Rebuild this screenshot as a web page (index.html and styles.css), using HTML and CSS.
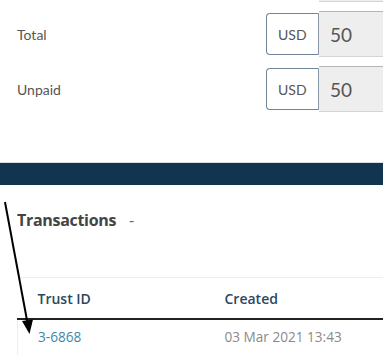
FILE: index.html
```html
<!DOCTYPE html>
<html>
<head>
    <title>Invoice</title>
    <link rel="stylesheet" href="styles.css">
</head>
<body>
    <div class="panel">
        <div class="form">
            <!-- previous field, scrolled mostly out of view -->
            <div class="row">
                <span></span>
                <div class="input-group">
                    <span class="addon"></span>
                    <span class="amount"></span>
                </div>
            </div>
            <div class="row">
                <label>Total</label>
                <div class="input-group">
                    <span class="addon">USD</span>
                    <input class="amount" value="50" readonly>
                </div>
            </div>
            <div class="row">
                <label>Unpaid</label>
                <div class="input-group">
                    <span class="addon">USD</span>
                    <input class="amount" value="50" readonly>
                </div>
            </div>
        </div>
    </div>
    <div class="band"></div>

    <div class="transactions">
        <h2>Transactions <span class="count">-</span></h2>
        <table>
            <thead>
                <tr>
                    <th class="col-id">Trust ID</th>
                    <th>Created</th>
                </tr>
            </thead>
            <tbody>
                <tr>
                    <td class="col-id"><a href="#">3-6868</a></td>
                    <td class="date">03 Mar 2021 13:43</td>
                </tr>
            </tbody>
        </table>
    </div>

    <!-- annotation arrow drawn over the page -->
    <svg class="arrow" width="60" height="357" viewBox="0 0 60 357">
        <line x1="5" y1="202" x2="27.5" y2="323" stroke="#000" stroke-width="2"/>
        <polygon points="29.5,334 22,321 33,319.5" fill="#000"/>
    </svg>
</body>
</html>
```

FILE: styles.css
```css
* {
    margin: 0;
    padding: 0;
    box-sizing: border-box;
}

body {
    font-family: Lato, 'Open Sans', sans-serif;
    background: #fff;
    width: 383px;
    height: 357px;
    overflow: hidden;
    position: relative;
}

.panel {
    padding: 0 0 50px 17px;
}

.form {
    margin-top: -44px;
    display: flex;
    flex-direction: column;
    gap: 9px;
}

.row {
    display: grid;
    grid-template-columns: 249px 1fr;
    align-items: center;
    height: 46px;
}

.row label {
    font-size: 14px;
    color: #555;
}

.input-group {
    display: flex;
    align-items: center;
    width: 220px;
}

.addon {
    height: 42px;
    width: 53px;
    border: 1px solid #73849a;
    border-right: 1px solid #8a97a6;
    border-radius: 4px 0 0 4px;
    background: #fff;
    font-size: 14px;
    color: #555;
    display: flex;
    align-items: center;
    padding-left: 11px;
}

.amount {
    display: block;
    height: 46px;
    width: 160px;
    border: 1px solid #d4d4d4;
    border-top-color: #b5b5b5;
    border-left: none;
    background: #eee;
    font-family: Lato, sans-serif;
    font-size: 19px;
    color: #555;
    padding-left: 11px;
    outline: none;
}

.band {
    height: 23px;
    background: #12354f;
    border-top: 1px solid #d9dee4;
}

.transactions {
    padding: 25px 0 0 17px;
    font-family: 'Open Sans', sans-serif;
}

.transactions h2 {
    font-size: 16px;
    font-weight: 700;
    line-height: 20px;
    letter-spacing: -0.3px;
    color: #444;
    margin-bottom: 47px;
}

.count {
    margin-left: 9px;
    font-weight: 400;
    color: #666;
}

table {
    border-collapse: collapse;
    width: 400px;
    font-size: 13.6px;
}

th {
    text-align: left;
    font-size: 14px;
    font-weight: 600;
    color: #2b4861;
    height: 41px;
    border-top: 1px solid #eee;
    border-bottom: 2px solid #222;
    padding-top: 2px;
}

td {
    height: 36px;
    padding-bottom: 1px;
}

.col-id {
    width: 207px;
    padding-left: 20px;
}

td.col-id {
    border-left: 1px solid #eee;
}

td a {
    color: #3d89aa;
    text-decoration: none;
}

.date {
    color: #8a8a8a;
}

.arrow {
    position: absolute;
    left: 0;
    top: 0;
}
```
